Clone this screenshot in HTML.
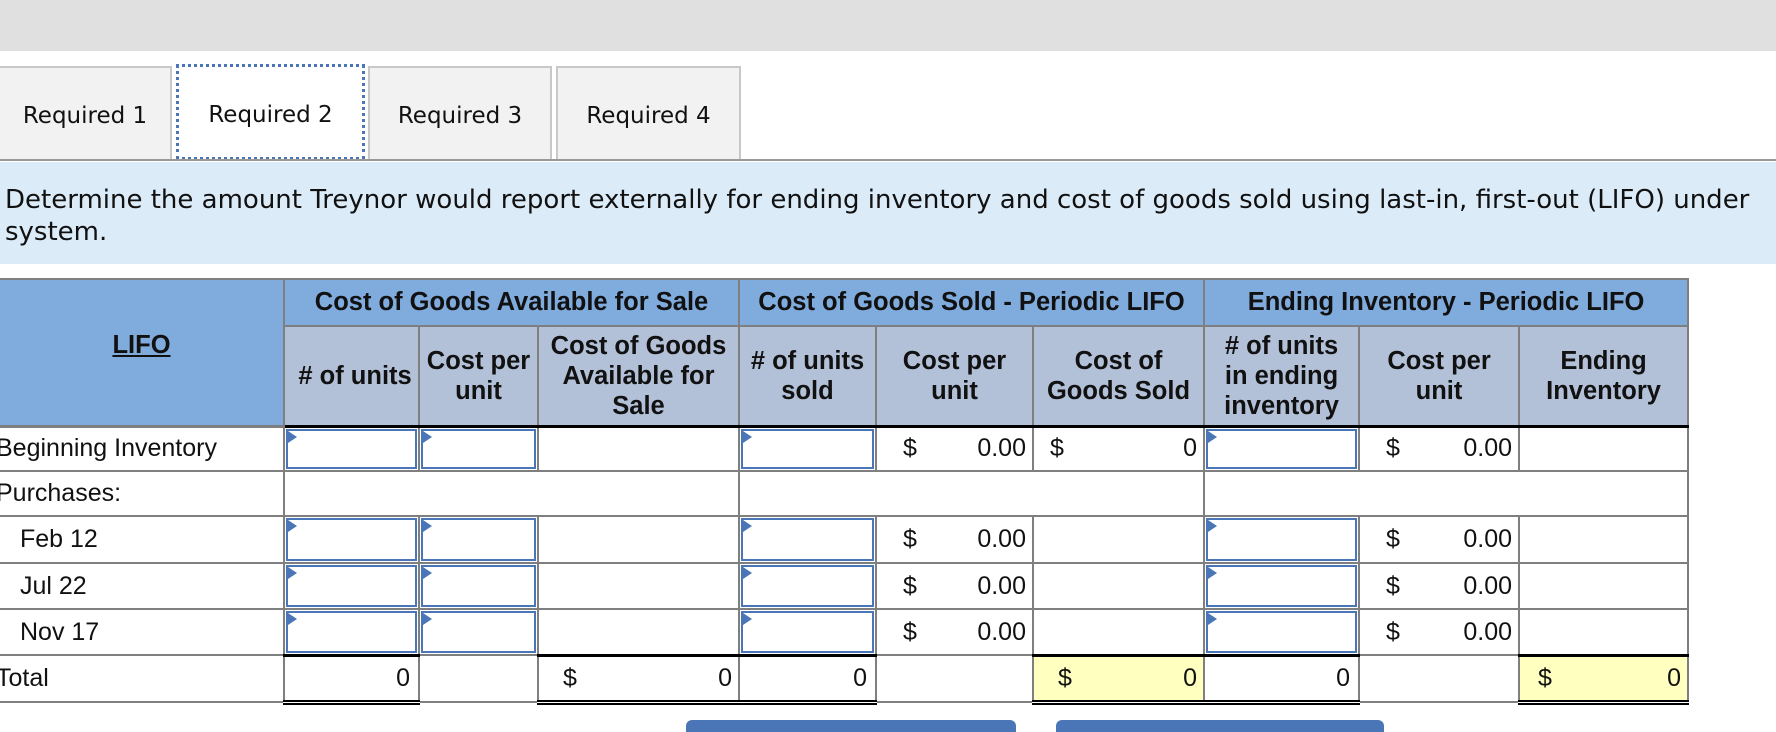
<!DOCTYPE html>
<html><head><meta charset="utf-8"><style>
*{box-sizing:border-box;margin:0;padding:0}
body{width:1776px;height:728px;overflow:hidden;background:#fff;font-family:"Liberation Sans",Arial,sans-serif;position:relative;color:#111}
.top{position:absolute;left:0;top:0;width:1776px;height:51px;background:#e0e0e0}
.tab{position:absolute;top:66px;height:94px;background:#f2f2f2;border:2px solid #c8c8c8;border-bottom:none;font-family:"DejaVu Sans",sans-serif;font-size:23px;line-height:96px;text-align:center}
.tabline{position:absolute;left:0;top:159px;width:1776px;height:2px;background:#999}
.band{position:absolute;left:0;top:162px;width:1776px;height:102px;background:#dcebf8;font-family:"DejaVu Sans",sans-serif;font-size:26px;line-height:32px;padding:22px 0 0 5px;white-space:nowrap}
table{position:absolute;left:0;top:278px;border-collapse:collapse;table-layout:fixed;width:1688px}
td{border:2px solid #7f7f7f;font-size:25px;padding:0;position:relative}
.h1{background:#80abdd;font-weight:bold;text-align:center;height:47px;font-size:25.5px;white-space:nowrap}
.h2{background:#b3c1d8;font-weight:bold;text-align:center;line-height:30px;border-bottom:3px solid #000;font-size:25.5px;padding:0 10px}
.lab{padding-left:0;text-indent:-4px;white-space:nowrap}
.ind{text-indent:20px}
.in::after{content:"";position:absolute;left:1px;top:1px;right:1px;bottom:1px;border:2px solid #4a76b8}
.in::before{content:"";position:absolute;left:3px;top:3px;border-left:9px solid #4a76b8;border-top:6px solid transparent;border-bottom:6px solid transparent;z-index:2}
.m{display:flex;justify-content:space-between;padding:0 6px 0 26px}
.r{text-align:right;padding-right:8px}
.y{background:#ffffc0}
.dbl{border-bottom:5px double #000}
.btn{position:absolute;top:720px;height:12px;background:#4a76b8;border-radius:6px 6px 0 0}
</style></head><body>
<div class="top"></div>
<div class="tab" style="left:-2px;width:174px">Required 1</div>
<div class="tab" style="left:176px;width:189px;background:#fff;border:3px dotted #4a76b8;height:96px;top:64px;line-height:96px">Required 2</div>
<div class="tab" style="left:368px;width:184px">Required 3</div>
<div class="tab" style="left:556px;width:185px">Required 4</div>
<div class="tabline"></div>
<div class="band">Determine the amount Treynor would report externally for ending inventory and cost of goods sold using last-in, first-out (LIFO) under<br>system.</div>
<table>
<colgroup><col style="width:284px"><col style="width:135px"><col style="width:119px"><col style="width:201px"><col style="width:137px"><col style="width:157px"><col style="width:171px"><col style="width:155px"><col style="width:160px"><col style="width:169px"></colgroup>
<tr><td class="h1" rowspan="2" style="border-bottom:3px solid #7f7f7f;border-left:none"><u>LIFO</u><div style="height:14px"></div></td><td class="h1" colspan="3">Cost of Goods Available for Sale</td><td class="h1" colspan="3">Cost of Goods Sold - Periodic LIFO</td><td class="h1" colspan="3">Ending Inventory - Periodic LIFO</td></tr>
<tr style="height:100px"><td class="h2" style="padding:0">&nbsp;# of units</td><td class="h2" style="padding:0">Cost per unit</td><td class="h2" style="padding:0 4px">Cost of Goods Available for Sale</td><td class="h2" style="padding:0 2px;white-space:nowrap"># of units<br>sold</td><td class="h2" style="padding:0 22px">Cost per unit</td><td class="h2" style="padding:0 8px">Cost of Goods Sold</td><td class="h2" style="padding:0 14px"># of units in ending inventory</td><td class="h2" style="padding:0 22px">Cost per unit</td><td class="h2">Ending Inventory</td></tr>
<tr style="height:45px"><td class="lab" style="border-left:none">Beginning Inventory</td><td class="in"></td><td class="in"></td><td></td><td class="in"></td><td><div class="m"><span>$</span><span>0.00</span></div></td><td><div class="m" style="padding-left:16px"><span>$</span><span>0</span></div></td><td class="in"></td><td><div class="m"><span>$</span><span>0.00</span></div></td><td></td></tr>
<tr style="height:45px"><td class="lab" style="border-left:none">Purchases:</td><td colspan="3"></td><td colspan="3" style="border-left-color:#000"></td><td colspan="3" style="border-left-color:#000"></td></tr>
<tr style="height:47px"><td class="lab ind" style="border-left:none">Feb 12</td><td class="in"></td><td class="in"></td><td></td><td class="in"></td><td><div class="m"><span>$</span><span>0.00</span></div></td><td></td><td class="in"></td><td><div class="m"><span>$</span><span>0.00</span></div></td><td></td></tr>
<tr style="height:46px"><td class="lab ind" style="border-left:none">Jul 22</td><td class="in"></td><td class="in"></td><td></td><td class="in"></td><td><div class="m"><span>$</span><span>0.00</span></div></td><td></td><td class="in"></td><td><div class="m"><span>$</span><span>0.00</span></div></td><td></td></tr>
<tr style="height:46px"><td class="lab ind" style="border-left:none">Nov 17</td><td class="in"></td><td class="in"></td><td></td><td class="in"></td><td><div class="m"><span>$</span><span>0.00</span></div></td><td></td><td class="in"></td><td><div class="m"><span>$</span><span>0.00</span></div></td><td></td></tr>
<tr style="height:47px"><td class="lab" style="border-left:none">Total</td><td class="r dbl" style="border-top:3px solid #000">0</td><td></td><td class="dbl" style="border-top:3px solid #000"><div class="m" style="padding-left:24px"><span>$</span><span>0</span></div></td><td class="r dbl" style="border-top:3px solid #000">0</td><td></td><td class="y dbl" style="border-top:3px solid #000"><div class="m" style="padding-left:24px"><span>$</span><span>0</span></div></td><td class="r dbl" style="border-top:3px solid #000">0</td><td></td><td class="y dbl" style="border-top:3px solid #000"><div class="m" style="padding-left:18px"><span>$</span><span>0</span></div></td></tr>
</table>
<div class="btn" style="left:686px;width:330px"></div>
<div class="btn" style="left:1056px;width:328px"></div>
</body></html>
